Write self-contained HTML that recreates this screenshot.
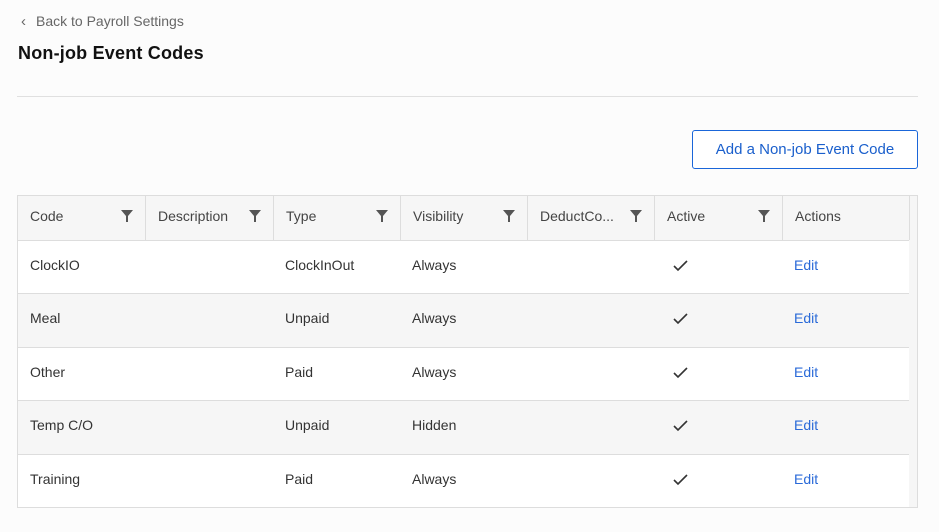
<!DOCTYPE html>
<html><head><meta charset="utf-8"><style>
*{margin:0;padding:0;box-sizing:border-box}
body{width:939px;height:532px;background:#fcfcfc;font-family:"Liberation Sans",sans-serif;position:relative;overflow:hidden;color:#222}
.a{position:absolute;white-space:nowrap}
.back{left:21px;top:13px;font-size:14px;color:#666}
.title{left:18px;top:43px;font-size:18px;font-weight:bold;color:#111;letter-spacing:0.2px}
.hr{left:17px;top:96px;width:901px;height:1px;background:#e0e0e0}
.btn{left:692px;top:130px;width:226px;height:39px;border:1px solid #1a66d9;border-radius:3px;background:#fff;color:#1a5fcc;font-size:15px;text-align:center;line-height:37px}
.tbl{left:17px;top:195px;width:901px;height:313px;border:1px solid #ddd;background:#f6f6f6}
.hd{position:absolute;top:0;height:44px;border-right:1px solid #ddd;font-size:14px;color:#444;line-height:41px;padding-left:12px;background:#f6f6f6}
.row{position:absolute;left:0;width:891px;height:53px;border-top:1px solid #ddd;font-size:14px;color:#333}
.row span{position:absolute;top:0;line-height:48px!important}
.f{position:absolute;top:14px;right:12px}
.e{color:#2a6ad8}
</style></head><body>
<div class="a back"><span style="font-size:15px;margin-right:10px">&#8249;</span>Back to Payroll Settings</div>
<div class="a title">Non-job Event Codes</div>
<div class="a hr"></div>
<div class="a btn">Add a Non-job Event Code</div>
<div class="a tbl">
<div class="hd" style="left:0;width:128px">Code<svg class="f" width="12" height="12" viewBox="0 0 12 12"><path d="M0 0H12L7 6V12H5V6Z" fill="#555"/></svg></div>
<div class="hd" style="left:128px;width:128px">Description<svg class="f" width="12" height="12" viewBox="0 0 12 12"><path d="M0 0H12L7 6V12H5V6Z" fill="#555"/></svg></div>
<div class="hd" style="left:256px;width:127px">Type<svg class="f" width="12" height="12" viewBox="0 0 12 12"><path d="M0 0H12L7 6V12H5V6Z" fill="#555"/></svg></div>
<div class="hd" style="left:383px;width:127px">Visibility<svg class="f" width="12" height="12" viewBox="0 0 12 12"><path d="M0 0H12L7 6V12H5V6Z" fill="#555"/></svg></div>
<div class="hd" style="left:510px;width:127px">DeductCo...<svg class="f" width="12" height="12" viewBox="0 0 12 12"><path d="M0 0H12L7 6V12H5V6Z" fill="#555"/></svg></div>
<div class="hd" style="left:637px;width:128px">Active<svg class="f" width="12" height="12" viewBox="0 0 12 12"><path d="M0 0H12L7 6V12H5V6Z" fill="#555"/></svg></div>
<div class="hd" style="left:765px;width:127px">Actions</div>

<div class="row" style="top:44px;background:#fff"><span style="left:12px">ClockIO</span><span style="left:267px">ClockInOut</span><span style="left:394px">Always</span><span style="left:655px"><svg width="15" height="12" viewBox="0 0 15 12" style="margin-top:19px"><path d="M1 6L5 10L14 1" fill="none" stroke="#333" stroke-width="1.6"/></svg></span><span class="e" style="left:776px">Edit</span></div>
<div class="row" style="top:97px;background:#f6f6f6;height:54px"><span style="left:12px">Meal</span><span style="left:267px">Unpaid</span><span style="left:394px">Always</span><span style="left:655px"><svg width="15" height="12" viewBox="0 0 15 12" style="margin-top:19px"><path d="M1 6L5 10L14 1" fill="none" stroke="#333" stroke-width="1.6"/></svg></span><span class="e" style="left:776px">Edit</span></div>
<div class="row" style="top:151px;background:#fff"><span style="left:12px">Other</span><span style="left:267px">Paid</span><span style="left:394px">Always</span><span style="left:655px"><svg width="15" height="12" viewBox="0 0 15 12" style="margin-top:19px"><path d="M1 6L5 10L14 1" fill="none" stroke="#333" stroke-width="1.6"/></svg></span><span class="e" style="left:776px">Edit</span></div>
<div class="row" style="top:204px;background:#f6f6f6;height:54px"><span style="left:12px">Temp C/O</span><span style="left:267px">Unpaid</span><span style="left:394px">Hidden</span><span style="left:655px"><svg width="15" height="12" viewBox="0 0 15 12" style="margin-top:19px"><path d="M1 6L5 10L14 1" fill="none" stroke="#333" stroke-width="1.6"/></svg></span><span class="e" style="left:776px">Edit</span></div>
<div class="row" style="top:258px;background:#fff"><span style="left:12px">Training</span><span style="left:267px">Paid</span><span style="left:394px">Always</span><span style="left:655px"><svg width="15" height="12" viewBox="0 0 15 12" style="margin-top:19px"><path d="M1 6L5 10L14 1" fill="none" stroke="#333" stroke-width="1.6"/></svg></span><span class="e" style="left:776px">Edit</span></div>
</div>
</body></html>
